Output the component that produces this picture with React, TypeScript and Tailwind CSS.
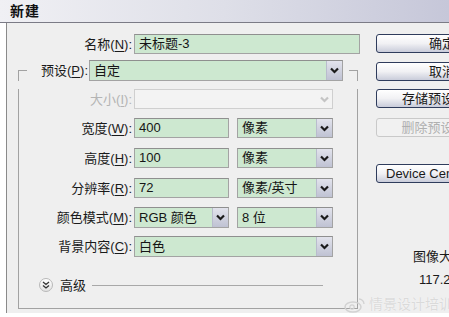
import React from "react"

const FONT = { fontFamily: '"Liberation Sans", "Noto Sans CJK SC", sans-serif' }

function Chevron({ disabled }: { disabled?: boolean }) {
  return (
    <svg width="9" height="7" viewBox="0 0 9 7">
      <path
        d="M1 1.5 L4.5 5 L8 1.5"
        fill="none"
        stroke={disabled ? "#c4c4c4" : "#1b1b1b"}
        strokeWidth="2.2"
      />
    </svg>
  )
}

function Label({ text, k, rest, width, disabled }: { text: string; k: string; rest?: string; width: number; disabled?: boolean }) {
  return (
    <div
      className={`shrink-0 text-right text-[13px] leading-none ${disabled ? "text-[#b4b4b4]" : "text-[#1a1a1a]"}`}
      style={{ width }}
    >
      {text}(<span className="underline underline-offset-2">{k}</span>){rest ?? ":"}
    </div>
  )
}

function Field({ value, width }: { value: string; width: number }) {
  return (
    <div
      className="h-full flex items-center border border-[#a3a3a3] border-t-[#8f8f8f] bg-[#cde8d0] pl-[4px] text-[13px] text-[#151515]"
      style={{ width }}
    >
      {value}
    </div>
  )
}

function Select({ value, width, disabled }: { value: string; width: number; disabled?: boolean }) {
  return (
    <div
      className={`h-full flex items-center border pl-[4px] text-[13px] text-[#151515] ${
        disabled ? "border-[#cfcfcf] bg-[#f3f3f3]" : "border-[#a3a3a3] border-t-[#8f8f8f] bg-[#cde8d0]"
      }`}
      style={{ width }}
    >
      <span className="flex-1">{value}</span>
      {disabled ? (
        <div className="w-[16px] h-full flex items-center justify-center">
          <Chevron disabled />
        </div>
      ) : (
        <div className="w-[16px] h-full flex items-center justify-center border-l border-[#b9bccd] bg-gradient-to-b from-[#e2e3ec] to-[#bfc2d3]">
          <Chevron />
        </div>
      )}
    </div>
  )
}

function Btn({ children, disabled, left }: { children: React.ReactNode; disabled?: boolean; left?: boolean }) {
  return (
    <div
      className={`w-[130px] h-[19px] rounded-[3px] border flex items-center text-[13px] ${
        left ? "pl-[9px]" : "justify-center pl-[2px]"
      } ${
        disabled
          ? "border-[#c9c9c9] bg-[#f1f1f1] text-[#b0b0b0]"
          : "border-[#2f3c5c] bg-gradient-to-b from-[#ffffff] via-[#f1f1f4] to-[#c9ccda] text-[#1a1a1a]"
      }`}
    >
      {children}
    </div>
  )
}

export default function App() {
  return (
    <div className="w-[449px] h-[317px] overflow-hidden bg-white relative" style={FONT}>
      {/* Title bar */}
      <div className="h-[23px] flex items-center pl-[10px] border-b border-[#7b7b86] bg-gradient-to-r from-[#f0f0f4] via-[#dedfe8] to-[#c6c7d9]">
        <span className="text-[14px] font-bold text-[#111] tracking-[1px]">新建</span>
      </div>

      {/* Body */}
      <div className="ml-[6px] h-[290px] border-l border-[#8a8a8a] bg-[#efefef] flex">
        {/* Left form */}
        <div className="w-[353px] shrink-0">
          <div className="mt-[11px] h-[20px] flex items-center">
            <Label text="名称" k="N" width={125} />
            <div className="ml-[2px] h-full">
              <Field value="未标题-3" width={226} />
            </div>
          </div>

          {/* Fieldset */}
          <div className="ml-[11px] w-[340px] mt-[6px]">
            <div className="h-[21px] flex">
              <div className="w-[9px] mt-[10px] border-t border-l border-[#a2a2a2]" />
              <div className="w-[61px] self-center">
                <Label text="预设" k="P" width={61} />
              </div>
              <div className="ml-[1px] h-full">
                <Select value="自定" width={254} />
              </div>
              <div className="ml-[6px] w-[9px] mt-[10px] border-t border-r border-[#a2a2a2]" />
            </div>

            <div className="border-l border-r border-b border-[#a2a2a2] pb-[16px]">
              <div className="mt-[8px] h-[20px] flex items-center">
                <Label text="大小" k="I" width={113} disabled />
                <div className="ml-[2px] h-full">
                  <Select value="" width={199} disabled />
                </div>
              </div>

              <div className="mt-[9px] h-[20px] flex items-center">
                <Label text="宽度" k="W" width={113} />
                <div className="ml-[2px] h-full flex gap-[8px]">
                  <Field value="400" width={95} />
                  <Select value="像素" width={96} />
                </div>
              </div>

              <div className="mt-[10px] h-[20px] flex items-center">
                <Label text="高度" k="H" width={113} />
                <div className="ml-[2px] h-full flex gap-[8px]">
                  <Field value="100" width={95} />
                  <Select value="像素" width={96} />
                </div>
              </div>

              <div className="mt-[10px] h-[20px] flex items-center">
                <Label text="分辨率" k="R" width={113} />
                <div className="ml-[2px] h-full flex gap-[8px]">
                  <Field value="72" width={95} />
                  <Select value="像素/英寸" width={96} />
                </div>
              </div>

              <div className="mt-[9px] h-[21px] flex items-center">
                <Label text="颜色模式" k="M" width={113} />
                <div className="ml-[2px] h-full flex gap-[8px]">
                  <Select value="RGB 颜色" width={95} />
                  <Select value="8 位" width={96} />
                </div>
              </div>

              <div className="mt-[8px] h-[21px] flex items-center">
                <Label text="背景内容" k="C" width={113} />
                <div className="ml-[2px] h-full">
                  <Select value="白色" width={199} />
                </div>
              </div>

              {/* Advanced */}
              <div className="mt-[21px] h-[14px] flex items-center mr-[34px]">
                <div className="ml-[20px] w-[14px] h-[14px] rounded-full border border-[#b8b8b8] bg-gradient-to-b from-white to-[#e2e2e2] flex items-center justify-center">
                  <svg width="8" height="8" viewBox="0 0 8 8">
                    <path d="M1 1 L4 3.5 L7 1 M1 4.5 L4 7 L7 4.5" fill="none" stroke="#333" strokeWidth="1.3" />
                  </svg>
                </div>
                <span className="ml-[7px] text-[13px] text-[#1a1a1a] leading-none">高级</span>
                <div className="ml-[6px] flex-1 h-px bg-[#a8a8a8]" />
              </div>
            </div>
          </div>
        </div>

        {/* Right buttons */}
        <div className="ml-[16px] flex flex-col">
          <div className="mt-[11px]">
            <Btn>确定</Btn>
          </div>
          <div className="mt-[9px]">
            <Btn>取消</Btn>
          </div>
          <div className="mt-[8px]">
            <Btn>存储预设(S)...</Btn>
          </div>
          <div className="mt-[10px]">
            <Btn disabled>删除预设(D)...</Btn>
          </div>
          <div className="mt-[27px]">
            <Btn left>Device Central...</Btn>
          </div>
          <div className="mt-[67px] ml-[37px] text-[13px] text-[#1a1a1a] leading-none whitespace-nowrap">图像大小:</div>
          <div className="mt-[10px] ml-[43px] text-[13px] text-[#1a1a1a] leading-none whitespace-nowrap">117.2K</div>
        </div>
      </div>

      {/* Watermark */}
      <div className="absolute left-[344px] top-[294px] flex items-center gap-[3px] text-[14px] text-[#dadada] whitespace-nowrap">
        <svg width="22" height="16" viewBox="0 0 22 16">
          <ellipse cx="9" cy="10" rx="8" ry="5" fill="none" stroke="#d2d2d2" strokeWidth="1.5" />
          <circle cx="8" cy="10" r="2.2" fill="none" stroke="#d2d2d2" strokeWidth="1.2" />
          <path d="M15 2 a5 5 0 0 1 5 5" fill="none" stroke="#d2d2d2" strokeWidth="1.3" />
        </svg>
        <span style={{ textShadow: "0 0 1px #fff" }}>情景设计培训</span>
      </div>
    </div>
  )
}
